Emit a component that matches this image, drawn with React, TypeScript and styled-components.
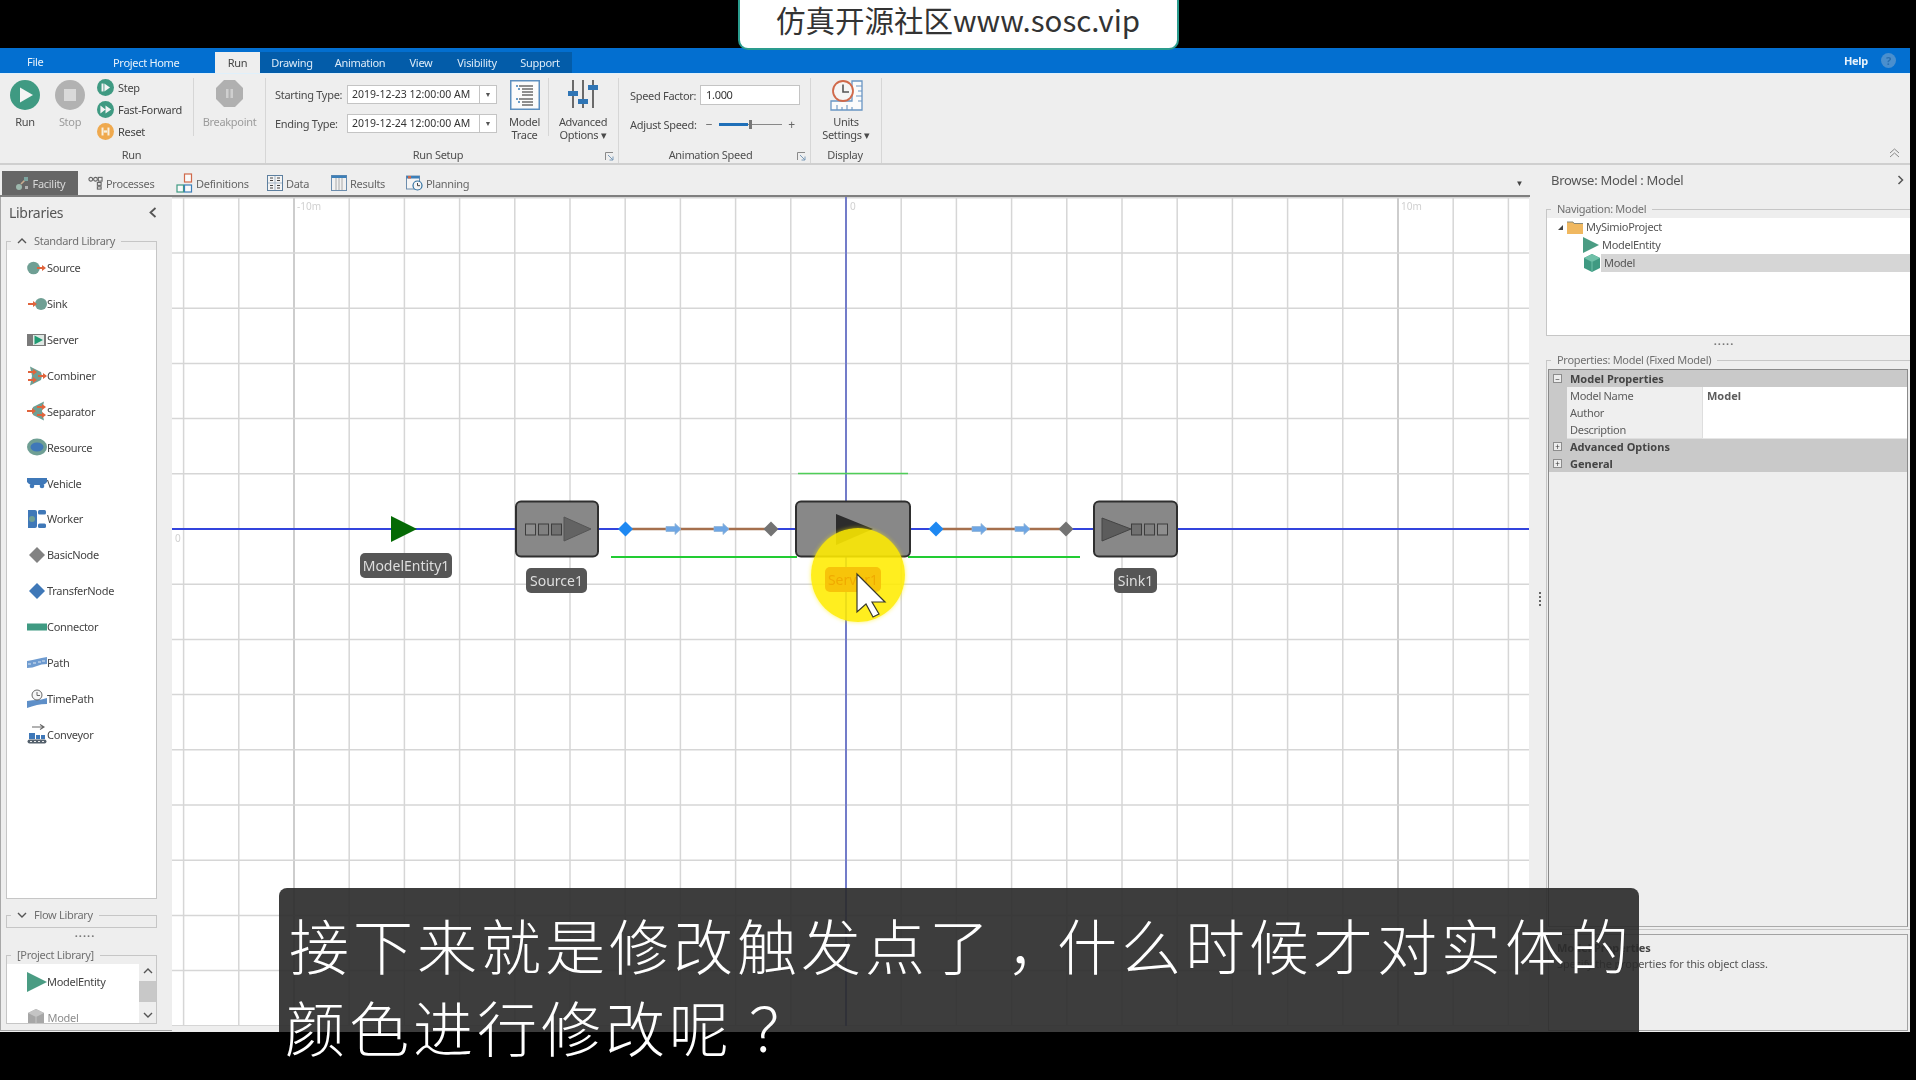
import React from "react";
import styled, { createGlobalStyle } from "styled-components";

const GlobalStyle = createGlobalStyle`
  html, body {
    margin: 0;
    padding: 0;
    background: #000;
  }
  * {
    box-sizing: border-box;
  }
`;

const UI_FONT = `"Noto Sans", "Open Sans", sans-serif`;
const CJK_FONT = `"Noto Sans CJK SC", "Noto Sans", sans-serif`;

const TEAL = "#3f9a82";
const GREY = "#b2b2b2";
const ORANGE = "#efa94e";

/* ---------- icons ---------- */

const Disc = ({ color, size, children }: any) => (
  <svg width={size} height={size} viewBox="0 0 30 30">
    <circle cx="15" cy="15" r="15" fill={color} />
    {children}
  </svg>
);

const RunIcon = () => (
  <Disc color={TEAL} size={30}>
    <path d="M10 7.5 L23 15 L10 22.5 Z" fill="#f4f4f4" />
  </Disc>
);

const StopIcon = () => (
  <Disc color={GREY} size={30}>
    <rect x="9" y="9" width="12" height="12" fill="#d9d9d9" />
  </Disc>
);

const StepIcon = () => (
  <Disc color={TEAL} size={17}>
    <rect x="8" y="8" width="3.5" height="14" fill="#f4f4f4" />
    <path d="M13 8 L23 15 L13 22 Z" fill="#f4f4f4" />
  </Disc>
);

const ForwardIcon = () => (
  <Disc color={TEAL} size={17}>
    <path d="M6 8 L15 15 L6 22 Z M15 8 L25 15 L15 22 Z" fill="#f4f4f4" />
  </Disc>
);

const ResetIcon = () => (
  <Disc color={ORANGE} size={17}>
    <rect x="8" y="8" width="3.5" height="14" fill="#f8f0e0" />
    <rect x="12" y="13" width="6" height="4" fill="#f8f0e0" />
    <rect x="18.5" y="8" width="3.5" height="14" fill="#f8f0e0" />
  </Disc>
);

const BreakpointIcon = () => (
  <svg width="27" height="27" viewBox="0 0 27 27">
    <path d="M8 0 H19 L27 8 V19 L19 27 H8 L0 19 V8 Z" fill="#b0b0b0" />
    <rect x="10" y="9" width="2.5" height="9" fill="#cfcfcf" />
    <rect x="14.5" y="9" width="2.5" height="9" fill="#cfcfcf" />
  </svg>
);

const TraceIcon = () => (
  <svg width="30" height="30" viewBox="0 0 30 30">
    <rect x="0.75" y="0.75" width="28.5" height="28.5" fill="#fbfbfb" stroke="#5d8fbf" strokeWidth="1.5" />
    <path d="M9 6 H23 M12 9 H23 M12 12 H23 M12 15 H23 M9 19 H23 M12 22 H23 M12 25 H23" stroke="#6c6c6c" strokeWidth="1.3" />
    <path d="M6 6 H8 M8 9 H10 M6 19 H8 M8 22 H10" stroke="#3c7fb8" strokeWidth="1.3" />
  </svg>
);

const SlidersIcon = () => (
  <svg width="32" height="30" viewBox="0 0 32 30">
    <path d="M6 0 V11 M6 16 V28 M16 0 V19 M16 24 V28 M26 0 V5 M26 10 V28" stroke="#6a6a6a" strokeWidth="2" />
    <rect x="1" y="11" width="10" height="5" fill="#2f75b5" />
    <rect x="11" y="19" width="10" height="5" fill="#2f75b5" />
    <rect x="21" y="5" width="10" height="5" fill="#2f75b5" />
  </svg>
);

const UnitsIcon = () => (
  <svg width="33" height="31" viewBox="0 0 33 31">
    <path d="M22 1 H32 V30 H1 V21 H22 Z" fill="#fbfbfb" stroke="#6a96c4" strokeWidth="1.3" />
    <path d="M26 6 H32 M28 11 H32 M26 16 H32 M28 21 H32 M7 25 V30 M12 27 V30 M17 25 V30 M22 27 V30" stroke="#6a96c4" strokeWidth="1.1" />
    <circle cx="13" cy="11" r="10" fill="#f5f5f5" stroke="#d0694a" strokeWidth="1.8" />
    <path d="M13 4.5 V12 H19" fill="none" stroke="#555" strokeWidth="1.6" />
  </svg>
);

const Launcher = () => (
  <svg width="9" height="9" viewBox="0 0 9 9">
    <path d="M0.5 8 V0.5 H8" fill="none" stroke="#8a8a8a" />
    <path d="M3 3 L8 8 M8 4.5 V8 H4.5" fill="none" stroke="#7a9ab8" />
  </svg>
);

const FacilityIcon = () => (
  <svg width="15" height="15" viewBox="0 0 15 15">
    <circle cx="4" cy="11" r="3" fill="#9db8ad" />
    <path d="M6 8 L11 3" stroke="#c9ad90" strokeWidth="1.6" />
    <rect x="9" y="1" width="4" height="4" fill="#7da5a0" />
    <rect x="10" y="10" width="3" height="3" fill="#b0b0b0" />
  </svg>
);

const ProcessesIcon = () => (
  <svg width="15" height="14" viewBox="0 0 16 14">
    <g fill="none" stroke="#666" strokeWidth="1.2">
      <circle cx="3" cy="3" r="2" />
      <circle cx="8" cy="3" r="2" />
      <rect x="11" y="1" width="4" height="4" />
      <rect x="10" y="6.5" width="4" height="3" />
      <rect x="10" y="11" width="4" height="2.5" />
    </g>
  </svg>
);

const DefinitionsIcon = () => (
  <svg width="17" height="20" viewBox="0 0 17 20">
    <g fill="#fafafa" strokeWidth="1.2">
      <rect x="8.5" y="1" width="7" height="8" stroke="#d0694a" />
      <rect x="1" y="12" width="6.5" height="7" stroke="#3f9a82" />
      <rect x="8.5" y="12" width="7" height="7" stroke="#3c7fb8" />
    </g>
  </svg>
);

const DataIcon = () => (
  <svg width="16" height="16" viewBox="0 0 16 16">
    <rect x="0.5" y="0.5" width="15" height="15" fill="#f4f4f4" stroke="#5d7f9f" />
    <path d="M8 1 V15 M1 8 H15" stroke="#a5b6c6" />
    <path d="M3 3 H6 M3 5.5 H6 M10 3 H13 M10 5.5 H13 M3 10.5 H6 M3 13 H6 M10 10.5 H13 M10 13 H13" stroke="#444" />
  </svg>
);

const ResultsIcon = () => (
  <svg width="16" height="16" viewBox="0 0 16 16">
    <rect x="0.5" y="0.5" width="15" height="15" fill="#f1f1f1" stroke="#6c8dad" />
    <rect x="0.5" y="0.5" width="15" height="2.5" fill="#3c7fb8" />
    <path d="M5 3 V15 M8 3 V15 M11 3 V15" stroke="#aaa" />
  </svg>
);

const PlanningIcon = () => (
  <svg width="17" height="16" viewBox="0 0 17 16">
    <rect x="0.5" y="1" width="13" height="13" fill="#f5f5f5" stroke="#6c8dad" />
    <rect x="0.5" y="1" width="13" height="2.5" fill="#3c7fb8" />
    <rect x="2" y="1" width="3" height="2.5" fill="#d0694a" />
    <circle cx="11.5" cy="10.5" r="4.5" fill="#f5f5f5" stroke="#2f6f9f" strokeWidth="1.2" />
    <path d="M11.5 8 V10.7 H14" fill="none" stroke="#444" />
  </svg>
);

const LibGlyph = ({ children, h = 20 }: any) => (
  <svg width="20" height={h} viewBox={`0 0 20 ${h}`}>
    {children}
  </svg>
);

const Dart = ({ x, y }: any) => (
  <path
    d={`M${x} ${y - 1} H${x + 5} V${y - 3} L${x + 9} ${y} L${x + 5} ${y + 3} V${y + 1} H${x} Z`}
    fill="#e0643c"
  />
);

const LIB_TEAL = "#6f9f94";
const LIB_BLUE = "#3f78b8";

const libraryIcons: Record<string, React.ReactNode> = {
  Source: (
    <LibGlyph>
      <circle cx="6.5" cy="10" r="6.3" fill={LIB_TEAL} />
      <Dart x={10} y={10} />
    </LibGlyph>
  ),
  Sink: (
    <LibGlyph>
      <circle cx="14" cy="10" r="6" fill={LIB_TEAL} />
      <Dart x={1} y={10} />
    </LibGlyph>
  ),
  Server: (
    <LibGlyph>
      <rect x="0" y="4" width="19" height="12" fill="#7a7a7a" />
      <rect x="6" y="5" width="11" height="10" fill="#dfe8e4" />
      <path d="M7.5 5.5 L16 10 L7.5 14.5 Z" fill="#1f9a72" />
    </LibGlyph>
  ),
  Combiner: (
    <LibGlyph>
      <path d="M3 0.5 L14 6 L15 10 L14 14 L3 19.5 L5 10 Z" fill={LIB_TEAL} />
      <Dart x={1} y={6} />
      <Dart x={1} y={14} />
      <Dart x={11} y={10} />
    </LibGlyph>
  ),
  Separator: (
    <LibGlyph>
      <path d="M17 0.5 L6 6 L5 10 L6 14 L17 19.5 L15 10 Z" fill={LIB_TEAL} />
      <Dart x={0} y={10} />
      <Dart x={10} y={6} />
      <Dart x={10} y={14} />
    </LibGlyph>
  ),
  Resource: (
    <LibGlyph>
      <ellipse cx="10" cy="10" rx="10" ry="8.5" fill={LIB_TEAL} />
      <ellipse cx="10" cy="10" rx="6.5" ry="4.5" fill={LIB_BLUE} />
    </LibGlyph>
  ),
  Vehicle: (
    <LibGlyph>
      <path d="M0 5 H20 V9 Q18 12 15 12 H5 Q2 12 0 9 Z" fill={LIB_BLUE} />
      <circle cx="5" cy="13" r="2.3" fill={LIB_BLUE} />
      <circle cx="15" cy="13" r="2.3" fill={LIB_BLUE} />
    </LibGlyph>
  ),
  Worker: (
    <LibGlyph>
      <path d="M1 1 H8 Q10 1 10 3 V17 Q10 19 8 19 H1 Z" fill={LIB_BLUE} />
      <rect x="11" y="1" width="8" height="4.5" rx="1.5" fill={LIB_BLUE} />
      <rect x="11" y="14.5" width="8" height="4.5" rx="1.5" fill={LIB_BLUE} />
      <circle cx="5" cy="10" r="3" fill={LIB_TEAL} />
    </LibGlyph>
  ),
  BasicNode: (
    <LibGlyph>
      <path d="M10 2 L18 10 L10 18 L2 10 Z" fill="#828282" />
    </LibGlyph>
  ),
  TransferNode: (
    <LibGlyph>
      <path d="M10 2 L18 10 L10 18 L2 10 Z" fill={LIB_BLUE} />
    </LibGlyph>
  ),
  Connector: (
    <LibGlyph>
      <rect x="0" y="6.5" width="20" height="7" fill="#3f9a82" />
    </LibGlyph>
  ),
  Path: (
    <LibGlyph>
      <path d="M0 9 Q6 8 10 7 T20 5 V12 Q14 12 10 14 T0 16 Z" fill="#6e9bd0" />
      <path d="M1 12 H4 M6 11 H9 M11 10 H14 M15 9 H18" stroke="#dce8f4" />
    </LibGlyph>
  ),
  TimePath: (
    <LibGlyph>
      <path d="M0 13 Q6 12 10 12 T20 10 V16 Q14 16 10 17 T0 20 Z" fill="#5e8fc8" />
      <circle cx="10" cy="7" r="5" fill="#f6f6f6" stroke="#6a6a6a" />
      <path d="M10 4 V7.5 H13" fill="none" stroke="#6a6a6a" />
    </LibGlyph>
  ),
  Conveyor: (
    <LibGlyph>
      <path d="M5 3 H17 M13 0.5 L17 3 L13 5.5" fill="none" stroke="#666" strokeWidth="1.1" />
      <rect x="2" y="9" width="6" height="6" fill={LIB_BLUE} />
      <rect x="9" y="11" width="4" height="4" fill={LIB_BLUE} />
      <rect x="14" y="11" width="4" height="4" fill={LIB_BLUE} />
      <rect x="0.5" y="15.5" width="19" height="4" rx="2" fill="#54606c" />
      <path d="M3 17.5 H5 M7 17.5 H9 M11 17.5 H13 M15 17.5 H17" stroke="#e8e8e8" />
    </LibGlyph>
  ),
};

const EntityIcon = ({ color, size = 20 }: any) => (
  <svg width={size} height={size} viewBox="0 0 20 20">
    <path d="M0 0 L20 10 L0 20 Z" fill={color} />
  </svg>
);

const CubeIcon = ({ top, side }: any) => (
  <svg width="18" height="18" viewBox="0 0 18 18">
    <path d="M9 0 L17 4 V14 L9 18 L1 14 V4 Z" fill={side} />
    <path d="M9 0 L17 4 L9 8 L1 4 Z" fill={top} />
    <path d="M9 8 V18" stroke={top} />
  </svg>
);

/* ---------- frame ---------- */

const Screen = styled.div`
  position: relative;
  width: 1916px;
  height: 1080px;
  background: #000;
  overflow: hidden;
  font-family: ${UI_FONT};
  display: flex;
  flex-direction: column;
`;

const TopStrip = styled.div`
  height: 48px;
  display: flex;
  justify-content: center;
`;

const Watermark = styled.div`
  position: relative;
  z-index: 3;
  width: 441px;
  height: 50px;
  background: #fff;
  border: 2px solid #2a9c8e;
  border-top: none;
  border-radius: 0 0 10px 10px;
  text-align: center;
  font-family: ${CJK_FONT};
  font-size: 29.5px;
  line-height: 38px;
  color: #333;
`;

const AppWindow = styled.div`
  width: 1910px;
  height: 984px;
  display: flex;
  flex-direction: column;
  background: #eeeeee;
  color: #4a4a4a;
  font-size: 11px;
  letter-spacing: -0.3px;
  filter: blur(0.35px);
`;

const TitleBar = styled.div`
  height: 25px;
  flex: none;
  display: flex;
  align-items: flex-end;
  background: #036fd0;
`;

const FileTab = styled.div`
  width: 70px;
  height: 21px;
  padding-left: 27px;
  line-height: 20px;
  color: #e8f2fb;
`;

const HomeTab = styled.div`
  width: 145px;
  height: 21px;
  padding-left: 43px;
  line-height: 21px;
  color: #e8f2fb;
`;

const ActiveTab = styled.div`
  width: 45px;
  height: 21px;
  background: #eeeeee;
  text-align: center;
  line-height: 22px;
  color: #444;
`;

const TabTrack = styled.div`
  width: 312px;
  height: 21px;
  display: flex;
  background: #035ca9;
  color: #dcebf8;
  line-height: 22px;
`;

const TrackTab = styled.span<{ $w: number }>`
  width: ${(p) => p.$w}px;
  text-align: center;
`;

const HelpArea = styled.div`
  margin-left: auto;
  height: 25px;
  display: flex;
  align-items: center;
  gap: 13px;
  padding-right: 14px;
  color: #e8f2fb;
  font-weight: 700;
`;

const HelpBadge = styled.span`
  width: 15px;
  height: 15px;
  border-radius: 50%;
  background: #4a8fce;
  color: #2a6fb0;
  text-align: center;
  line-height: 15px;
`;

/* ---------- ribbon ---------- */

const Ribbon = styled.div`
  position: relative;
  height: 92px;
  flex: none;
  display: flex;
  background: #eeeeee;
  border-top: 1px solid #dff0fb;
  border-bottom: 2px solid #cfcfcf;
`;

const Group = styled.div<{ $w: number }>`
  position: relative;
  width: ${(p) => p.$w}px;
  margin-top: 4px;
  display: flex;
  flex-direction: column;
  border-right: 1px solid #d6d6d6;
`;

const GroupBody = styled.div`
  flex: 1;
  display: flex;
  min-height: 0;
`;

const GroupCaption = styled.div<{ $pr?: number }>`
  height: 15px;
  padding-right: ${(p) => p.$pr ?? 0}px;
  text-align: center;
  line-height: 14px;
  color: #4f4f4f;
`;

const LauncherSlot = styled.span`
  position: absolute;
  right: 4px;
  bottom: 2px;
  line-height: 0;
`;

const BigButton = styled.div<{ $w: number; $muted?: boolean }>`
  width: ${(p) => p.$w}px;
  flex: none;
  display: flex;
  flex-direction: column;
  align-items: center;
  padding-top: 2px;
  color: ${(p) => (p.$muted ? "#9b9b9b" : "#4a4a4a")};
`;

const BigIcon = styled.div`
  height: 35px;
  line-height: 0;
`;

const BigLabel = styled.div`
  line-height: 13px;
  text-align: center;
  white-space: nowrap;
`;

const VSep = styled.div`
  width: 1px;
  height: 58px;
  flex: none;
  background: #d6d6d6;
`;

const ActionColumn = styled.div`
  width: 103px;
  flex: none;
  margin-top: -2px;
  padding-left: 7px;
  display: flex;
  flex-direction: column;
`;

const ActionRow = styled.div`
  height: 22px;
  display: flex;
  align-items: center;
  gap: 4px;
  color: #444;
  white-space: nowrap;
`;

const FieldGrid = styled.div`
  width: 226px;
  flex: none;
  margin: 7px 0 0 9px;
  display: grid;
  grid-template-columns: 72px 1fr;
  grid-auto-rows: 19px;
  row-gap: 10px;
  align-items: center;
  white-space: nowrap;
`;

const Combo = styled.div`
  height: 19px;
  width: 150px;
  display: flex;
  background: #fff;
  border: 1px solid #c4c4c4;
  color: #333;
  font-size: 10.5px;
  letter-spacing: 0;
  line-height: 17px;
  padding-left: 4px;
`;

const ComboText = styled.span`
  flex: 1;
  white-space: nowrap;
`;

const ComboArrow = styled.span`
  width: 17px;
  border-left: 1px solid #c4c4c4;
  text-align: center;
  font-size: 7px;
  color: #555;
`;

const SpeedGrid = styled.div`
  margin: 7px 0 0 11px;
  width: 172px;
  display: grid;
  grid-template-columns: 70px 100px;
  grid-auto-rows: 20px;
  row-gap: 9px;
  align-items: center;
  white-space: nowrap;
`;

const SpeedInput = styled.div`
  height: 20px;
  background: #fff;
  border: 1px solid #c4c4c4;
  padding-left: 5px;
  line-height: 18px;
  color: #333;
`;

const SliderRow = styled.div`
  display: flex;
  align-items: center;
  color: #666;
  font-size: 12px;
`;

const SliderTrack = styled.div`
  position: relative;
  width: 63px;
  height: 1px;
  margin: 0 6px 0 7px;
  background: #888;
`;

const SliderFill = styled.div`
  position: absolute;
  left: 0;
  top: -1px;
  height: 3px;
  background: #1f6fb8;
`;

const SliderThumb = styled.div`
  position: absolute;
  top: -4px;
  width: 3px;
  height: 9px;
  background: #777;
`;

const CollapseMark = styled.svg`
  position: absolute;
  right: 10px;
  bottom: 5px;
`;

/* ---------- workspace ---------- */

const Workspace = styled.div`
  flex: 1;
  min-height: 0;
  display: flex;
`;

const MainColumn = styled.div`
  width: 1530px;
  flex: none;
  display: flex;
  flex-direction: column;
`;

const DocTabs = styled.div`
  height: 32px;
  flex: none;
  display: flex;
  align-items: flex-end;
  padding: 0 4px 0 2px;
  border-bottom: 2px solid #7f7f7f;
`;

const DocTab = styled.div<{ $w: number; $active?: boolean }>`
  width: ${(p) => p.$w}px;
  height: 24px;
  display: flex;
  align-items: center;
  justify-content: ${(p) => (p.$active ? "center" : "flex-start")};
  padding-left: ${(p) => (p.$active ? 0 : 10)}px;
  gap: 3px;
  white-space: nowrap;
  background: ${(p) => (p.$active ? "#666666" : "transparent")};
  color: ${(p) => (p.$active ? "#d9d9d9" : "#666")};
`;

const DocMenu = styled.span`
  margin-left: auto;
  align-self: center;
  font-size: 8px;
  color: #444;
  padding: 5px 3px 0 0;
`;

const MainRow = styled.div`
  flex: 1;
  min-height: 0;
  display: flex;
`;

const LibraryPanel = styled.div`
  width: 172px;
  flex: none;
  padding-left: 5px;
  display: flex;
  flex-direction: column;
  border-left: 1px solid #a8a8a8;
  border-bottom: 1px solid #a8a8a8;
  margin-bottom: 1px;
`;

const LibraryHead = styled.div`
  height: 35px;
  flex: none;
  display: flex;
  align-items: center;
  justify-content: space-between;
  padding: 0 15px 5px 3px;
  font-size: 14px;
  color: #555;
`;

const ChevronGlyph = styled.svg`
  flex: none;
`;

const Frame = styled.fieldset<{ $h: number; $w?: number; $gap?: number; $open?: boolean }>`
  width: ${(p) => p.$w ?? 151}px;
  height: ${(p) => p.$h}px;
  flex: none;
  margin: ${(p) => p.$gap ?? 0}px 0 0;
  padding: 0;
  border: 1px solid #c6c6c6;
  border-right: ${(p) => (p.$open ? "none" : "1px solid #c6c6c6")};
  min-width: 0;
`;

const FrameTitle = styled.legend`
  height: 18px;
  padding: 0 6px;
  margin-left: 4px;
  line-height: 18px;
  color: #707070;
  display: flex;
  align-items: center;
  gap: 7px;
`;

const LibList = styled.div<{ $h: number }>`
  flex: 1;
  height: ${(p) => p.$h}px;
  background: #fff;
  overflow: hidden;
`;

const LibItem = styled.div<{ $muted?: boolean }>`
  height: 35.87px;
  padding-left: 20px;
  display: flex;
  align-items: center;
  color: ${(p) => (p.$muted ? "#8c8c8c" : "#444")};
  white-space: nowrap;
`;

const DotsRow = styled.div<{ $h: number }>`
  height: ${(p) => p.$h}px;
  flex: none;
  text-align: center;
  letter-spacing: 1px;
  line-height: 10px;
  color: #777;
  font-weight: 700;
  padding-right: 8px;
`;

const ProjectBody = styled.div`
  height: 59px;
  display: flex;
`;

const ScrollRail = styled.div`
  width: 17px;
  flex: none;
  display: flex;
  flex-direction: column;
  align-items: center;
  background: #eeeeee;
  color: #666;
`;

const ScrollThumb = styled.div`
  width: 100%;
  height: 21px;
  margin: 3px 0 6px;
  background: #c8c8c8;
`;

const ScrollBtn = styled.div`
  height: 14px;
  display: flex;
  align-items: center;
`;

const Canvas = styled.div`
  position: relative;
  width: 1357px;
  height: 829px;
  flex: none;
  background: #fff;
  overflow: hidden;
  letter-spacing: 0;
`;

const Diagram = styled.svg`
  position: absolute;
  left: 0;
  top: 0;
`;

const Ruler = styled.span<{ $x: number; $y: number }>`
  position: absolute;
  left: ${(p) => p.$x - 172}px;
  top: ${(p) => p.$y - 197}px;
  font-size: 10px;
  line-height: 12px;
  color: #d0d0d0;
`;

const NodeLabel = styled.div<{ $x: number; $y: number; $w: number; $hot?: boolean }>`
  position: absolute;
  z-index: ${(p) => (p.$hot ? 2 : 0)};
  left: ${(p) => p.$x - 172}px;
  top: ${(p) => p.$y - 197}px;
  width: ${(p) => p.$w}px;
  height: 25px;
  background: ${(p) => (p.$hot ? "#f7c40a" : "#565656")};
  border-radius: 5px;
  text-align: center;
  line-height: 26px;
  font-size: 14px;
  color: ${(p) => (p.$hot ? "#f0aa00" : "#dedede")};
  white-space: nowrap;
`;

const Highlight = styled.div`
  position: absolute;
  z-index: 1;
  left: ${811 - 172}px;
  top: ${528 - 197}px;
  width: 94px;
  height: 94px;
  border-radius: 50%;
  background: rgba(255, 236, 0, 0.88);
  box-shadow: 0 0 4px rgba(255, 236, 0, 0.6);
`;

const PointerOverlay = styled.svg`
  position: absolute;
  z-index: 3;
  left: ${850 - 172}px;
  top: ${570 - 197}px;
`;

/* ---------- right panel ---------- */

const Splitter = styled.div`
  width: 14px;
  flex: none;
  display: flex;
  align-items: center;
  justify-content: center;
`;

const GripDots = styled.div`
  width: 2px;
  height: 14px;
  margin-left: 6px;
  background: repeating-linear-gradient(#666 0 2px, transparent 2px 4px);
`;

const SidePanel = styled.div`
  flex: 1;
  min-width: 0;
  display: flex;
  flex-direction: column;
  padding-left: 2px;
  overflow: hidden;
`;

const SideHead = styled.div`
  height: 35px;
  flex: none;
  display: flex;
  align-items: center;
  justify-content: space-between;
  padding: 0 6px 5px 5px;
  font-size: 13px;
  color: #555;
`;

const NavTree = styled.div`
  height: 117px;
  background: #fff;
`;

const TreeRow = styled.div<{ $indent: number }>`
  height: 18px;
  display: flex;
  align-items: center;
  padding-left: ${(p) => p.$indent}px;
  color: #555;
`;

const TreeLabel = styled.span<{ $selected?: boolean }>`
  flex: 1;
  height: 18px;
  line-height: 18px;
  padding-left: 3px;
  background: ${(p) => (p.$selected ? "#d6d6d6" : "transparent")};
`;

const ExpandArrow = styled.span`
  width: 0;
  height: 0;
  margin-right: 4px;
  border-left: 5px solid transparent;
  border-bottom: 5px solid #444;
`;

const PropsBox = styled.div`
  width: 360px;
  height: 558px;
  margin-left: 1px;
  background: #eeeeee;
  border: 1px solid #8a8a8a;
  border-bottom-color: #aaa;
`;

const SectionRow = styled.div`
  height: 17px;
  display: flex;
  align-items: center;
  background: #c9c9c9;
  font-weight: 700;
  letter-spacing: 0;
  color: #444;
`;

const ToggleBox = styled.span`
  width: 9px;
  height: 9px;
  margin: 0 8px 0 4px;
  border: 1px solid #8c8c8c;
  background: #ececec;
  font-size: 8px;
  line-height: 7px;
  text-align: center;
  font-weight: 400;
  color: #333;
`;

const PropRow = styled.div`
  height: 17px;
  display: grid;
  grid-template-columns: 18px 135px 1fr;
  color: #5c5c5c;
`;

const Gutter = styled.div`
  background: #c9c9c9;
`;

const PropName = styled.div`
  padding-left: 3px;
  line-height: 17px;
  background: #efefef;
  border-bottom: 1px solid #dedede;
`;

const PropValue = styled.div`
  padding-left: 4px;
  line-height: 17px;
  background: #fff;
  border-left: 1px solid #dedede;
  border-bottom: 1px solid #e6e6e6;
  font-weight: 700;
  letter-spacing: 0;
`;

const HelpBox = styled.div`
  width: 360px;
  height: 97px;
  flex: none;
  margin: 4px 0 1px 2px;
  padding: 5px 8px;
  border: 1px solid #a2a2a2;
  line-height: 16px;
  letter-spacing: -0.15px;
  color: #555;
`;

const HelpTitle = styled.div`
  font-weight: 700;
  letter-spacing: 0;
  color: #444;
`;

/* ---------- caption ---------- */

const Caption = styled.div`
  position: absolute;
  z-index: 4;
  left: 279px;
  top: 888px;
  width: 1360px;
  height: 144px;
  padding: 15px 0 0 10px;
  background: rgba(42, 42, 42, 0.91);
  border-radius: 8px 8px 0 0;
  font-family: ${CJK_FONT};
  font-size: 60px;
  font-weight: 300;
  line-height: 82px;
  letter-spacing: 4px;
  color: #fff;
  white-space: nowrap;
`;

const CaptionLine = styled.div<{ $nudge?: boolean }>`
  margin-left: ${(p) => (p.$nudge ? -4 : 0)}px;
`;

const Punct = styled.span<{ $dx: number }>`
  display: inline-block;
  transform: translateX(${(p) => p.$dx}px);
`;

/* ---------- data ---------- */

const trackTabs: [string, number][] = [
  ["Drawing", 64],
  ["Animation", 72],
  ["View", 50],
  ["Visibility", 62],
  ["Support", 64],
];

const docTabs = [
  { name: "Processes", w: 88, icon: <ProcessesIcon /> },
  { name: "Definitions", w: 91, icon: <DefinitionsIcon /> },
  { name: "Data", w: 64, icon: <DataIcon /> },
  { name: "Results", w: 75, icon: <ResultsIcon /> },
  { name: "Planning", w: 80, icon: <PlanningIcon /> },
];

const libraryNames = [
  "Source",
  "Sink",
  "Server",
  "Combiner",
  "Separator",
  "Resource",
  "Vehicle",
  "Worker",
  "BasicNode",
  "TransferNode",
  "Connector",
  "Path",
  "TimePath",
  "Conveyor",
];

const steps = Array.from({ length: 27 }, (_, i) => i - 13);

const BlockArrow = ({ x }: any) => (
  <path
    d={`M${x} 526.5 H${x + 9} V523.5 L${x + 15} 529 L${x + 9} 534.5 V531.5 H${x} Z`}
    fill="#6ea6e4"
    stroke="#8fb4d8"
    strokeWidth="0.8"
  />
);

const Diamond = ({ x, color, r = 7.5 }: any) => (
  <path d={`M${x} ${529 - r} L${x + r} 529 L${x} ${529 + r} L${x - r} 529 Z`} fill={color} />
);

const Pad = ({ x, w }: any) => (
  <rect x={x} y="501.5" width={w} height="55" rx="5" fill="#888888" stroke="#2f2f2f" strokeWidth="2" />
);

const Cell = ({ x, tone }: any) => (
  <rect x={x} y="524" width="10" height="11" fill={tone} stroke="#3c3c3c" />
);

const chevronUp = <path d="M1 6 L5 2 L9 6" fill="none" stroke="#555" strokeWidth="1.4" />;
const chevronDown = <path d="M1 2 L5 6 L9 2" fill="none" stroke="#555" strokeWidth="1.4" />;

export default function App() {
  return (
    <Screen>
      <GlobalStyle />
      <TopStrip>
        <Watermark>仿真开源社区www.sosc.vip</Watermark>
      </TopStrip>

      <AppWindow>
        <TitleBar>
          <FileTab>File</FileTab>
          <HomeTab>Project Home</HomeTab>
          <ActiveTab>Run</ActiveTab>
          <TabTrack>
            {trackTabs.map(([name, w]) => (
              <TrackTab key={name} $w={w}>
                {name}
              </TrackTab>
            ))}
          </TabTrack>
          <HelpArea>
            Help
            <HelpBadge>?</HelpBadge>
          </HelpArea>
        </TitleBar>

        <Ribbon>
          <Group $w={266}>
            <GroupBody>
              <BigButton $w={50}>
                <BigIcon>
                  <RunIcon />
                </BigIcon>
                <BigLabel>Run</BigLabel>
              </BigButton>
              <BigButton $w={40} $muted>
                <BigIcon>
                  <StopIcon />
                </BigIcon>
                <BigLabel>Stop</BigLabel>
              </BigButton>
              <ActionColumn>
                <ActionRow>
                  <StepIcon />
                  Step
                </ActionRow>
                <ActionRow>
                  <ForwardIcon />
                  Fast-Forward
                </ActionRow>
                <ActionRow>
                  <ResetIcon />
                  Reset
                </ActionRow>
              </ActionColumn>
              <VSep />
              <BigButton $w={71} $muted>
                <BigIcon>
                  <BreakpointIcon />
                </BigIcon>
                <BigLabel>Breakpoint</BigLabel>
              </BigButton>
            </GroupBody>
            <GroupCaption $pr={2}>Run</GroupCaption>
          </Group>

          <Group $w={353}>
            <GroupBody>
              <FieldGrid>
                Starting Type:
                <Combo>
                  <ComboText>2019-12-23 12:00:00 AM</ComboText>
                  <ComboArrow>▼</ComboArrow>
                </Combo>
                Ending Type:
                <Combo>
                  <ComboText>2019-12-24 12:00:00 AM</ComboText>
                  <ComboArrow>▼</ComboArrow>
                </Combo>
              </FieldGrid>
              <BigButton $w={47}>
                <BigIcon>
                  <TraceIcon />
                </BigIcon>
                <BigLabel>Model</BigLabel>
                <BigLabel>Trace</BigLabel>
              </BigButton>
              <VSep />
              <BigButton $w={68}>
                <BigIcon>
                  <SlidersIcon />
                </BigIcon>
                <BigLabel>Advanced</BigLabel>
                <BigLabel>Options ▾</BigLabel>
              </BigButton>
            </GroupBody>
            <GroupCaption $pr={8}>Run Setup</GroupCaption>
            <LauncherSlot>
              <Launcher />
            </LauncherSlot>
          </Group>

          <Group $w={192}>
            <GroupBody>
              <SpeedGrid>
                Speed Factor:
                <SpeedInput>1.000</SpeedInput>
                Adjust Speed:
                <SliderRow>
                  &nbsp;&nbsp;−
                  <SliderTrack>
                    <SliderFill style={{ width: "46%" }} />
                    <SliderThumb style={{ left: "47%" }} />
                  </SliderTrack>
                  +
                </SliderRow>
              </SpeedGrid>
            </GroupBody>
            <GroupCaption $pr={8}>Animation Speed</GroupCaption>
            <LauncherSlot>
              <Launcher />
            </LauncherSlot>
          </Group>

          <Group $w={71}>
            <GroupBody>
              <BigButton $w={70}>
                <BigIcon>
                  <UnitsIcon />
                </BigIcon>
                <BigLabel>Units</BigLabel>
                <BigLabel>Settings ▾</BigLabel>
              </BigButton>
            </GroupBody>
            <GroupCaption $pr={2}>Display</GroupCaption>
          </Group>

          <CollapseMark width="11" height="10" viewBox="0 0 11 10">
            <path d="M1 5 L5.5 1 L10 5 M1 9 L5.5 5 L10 9" fill="none" stroke="#8a8a8a" />
          </CollapseMark>
        </Ribbon>

        <Workspace>
          <MainColumn>
            <DocTabs>
              <DocTab $w={76} $active>
                <FacilityIcon />
                Facility
              </DocTab>
              {docTabs.map((tab) => (
                <DocTab key={tab.name} $w={tab.w}>
                  {tab.icon}
                  {tab.name}
                </DocTab>
              ))}
              <DocMenu>▼</DocMenu>
            </DocTabs>

            <MainRow>
              <LibraryPanel>
                <LibraryHead>
                  Libraries
                  <ChevronGlyph width="8" height="11" viewBox="0 0 8 11">
                    <path d="M6.5 1 L1.5 5.5 L6.5 10" fill="none" stroke="#555" strokeWidth="1.8" />
                  </ChevronGlyph>
                </LibraryHead>
                <Frame $h={667}>
                  <FrameTitle>
                    <svg width="10" height="8" viewBox="0 0 10 8">
                      {chevronUp}
                    </svg>
                    Standard Library
                  </FrameTitle>
                  <LibList $h={648}>
                    {libraryNames.map((name) => (
                      <LibItem key={name}>
                        {libraryIcons[name]}
                        {name}
                      </LibItem>
                    ))}
                  </LibList>
                </Frame>
                <Frame $h={22} $gap={7}>
                  <FrameTitle>
                    <svg width="10" height="8" viewBox="0 0 10 8">
                      {chevronDown}
                    </svg>
                    Flow Library
                  </FrameTitle>
                </Frame>
                <DotsRow $h={18}>.....</DotsRow>
                <Frame $h={78}>
                  <FrameTitle>[Project Library]</FrameTitle>
                  <ProjectBody>
                    <LibList $h={59}>
                      <LibItem>
                        <EntityIcon color="#4a9c83" />
                        ModelEntity
                      </LibItem>
                      <LibItem $muted>
                        <CubeIcon top="#c4c4c4" side="#a6a6a6" />
                        &nbsp;Model
                      </LibItem>
                    </LibList>
                    <ScrollRail>
                      <ScrollBtn>
                        <svg width="10" height="8" viewBox="0 0 10 8">
                          {chevronUp}
                        </svg>
                      </ScrollBtn>
                      <ScrollThumb />
                      <ScrollBtn>
                        <svg width="10" height="8" viewBox="0 0 10 8">
                          {chevronDown}
                        </svg>
                      </ScrollBtn>
                    </ScrollRail>
                  </ProjectBody>
                </Frame>
              </LibraryPanel>

              <Canvas>
                <Diagram width="1357" height="829" viewBox="172 197 1357 829">
                  {steps.map((n) => (
                    <line
                      key={`v${n}`}
                      x1={846 + n * 55.2}
                      x2={846 + n * 55.2}
                      y1="197"
                      y2="1026"
                      stroke={n % 10 === 0 ? "#bdbdbd" : "#d6d6d6"}
                      strokeWidth="1.5"
                    />
                  ))}
                  {steps.map((n) => (
                    <line key={`h${n}`} x1="172" x2="1529" y1={529 + n * 55.2} y2={529 + n * 55.2} stroke="#d6d6d6" strokeWidth="1.5" />
                  ))}
                  <line x1="846" x2="846" y1="197" y2="1026" stroke="#5c68c8" strokeWidth="1.6" />
                  <line x1="172" x2="1529" y1="529" y2="529" stroke="#3344dd" strokeWidth="2" />
                  <line x1="798" x2="908" y1="473.5" y2="473.5" stroke="#4fce58" strokeWidth="1.4" />
                  <line x1="611" x2="797" y1="557" y2="557" stroke="#22cc33" strokeWidth="2" />
                  <line x1="908" x2="1080" y1="557" y2="557" stroke="#22cc33" strokeWidth="2" />
                  <line x1="625" x2="771" y1="529" y2="529" stroke="#a56f4d" strokeWidth="2.4" />
                  <line x1="936" x2="1066" y1="529" y2="529" stroke="#a56f4d" strokeWidth="2.4" />
                  <BlockArrow x={666} />
                  <BlockArrow x={714} />
                  <BlockArrow x={972} />
                  <BlockArrow x={1015} />
                  <Diamond x={625.5} color="#1e88f2" />
                  <Diamond x={771} color="#737373" />
                  <Diamond x={936} color="#1e88f2" />
                  <Diamond x={1066} color="#737373" />

                  <path d="M391 516 L417 529 L391 542 Z" fill="#056a05" />

                  <Pad x={516} w={82} />
                  <Cell x={525.5} tone="#8e8e8e" />
                  <Cell x={538.5} tone="#808080" />
                  <Cell x={551.5} tone="#707070" />
                  <path d="M564 517 L591 529 L564 541 Z" fill="#636363" stroke="#555" />

                  <Pad x={796} w={114} />
                  <path d="M836 514 L873 529 L836 545 Z" fill="#2c2c2c" />

                  <Pad x={1094} w={83} />
                  <path d="M1102 518 L1131 529 L1102 541 Z" fill="#5c5c5c" stroke="#444" />
                  <Cell x={1131.5} tone="#707070" />
                  <Cell x={1144.5} tone="#808080" />
                  <Cell x={1157.5} tone="#8e8e8e" />
                </Diagram>

                <Ruler $x={297} $y={200}>-10m</Ruler>
                <Ruler $x={850} $y={200}>0</Ruler>
                <Ruler $x={1401} $y={200}>10m</Ruler>
                <Ruler $x={175} $y={532}>0</Ruler>

                <NodeLabel $x={360} $y={553} $w={92}>ModelEntity1</NodeLabel>
                <NodeLabel $x={526} $y={568} $w={61}>Source1</NodeLabel>
                <NodeLabel $x={825} $y={567} $w={56} $hot>Server1</NodeLabel>
                <NodeLabel $x={1114} $y={568} $w={43}>Sink1</NodeLabel>

                <Highlight />
                <PointerOverlay width="40" height="52" viewBox="850 570 40 52">
                  <path
                    d="M857 574 L857 612 L866 604 L873 617 L879 614 L872 602 L885 602 Z"
                    fill="#fff"
                    stroke="#3a3a2a"
                    strokeWidth="1.2"
                  />
                </PointerOverlay>
              </Canvas>
            </MainRow>
          </MainColumn>

          <Splitter>
            <GripDots />
          </Splitter>

          <SidePanel>
            <SideHead>
              Browse: Model : Model
              <ChevronGlyph width="7" height="10" viewBox="0 0 7 10">
                <path d="M1.5 1 L5.5 5 L1.5 9" fill="none" stroke="#555" strokeWidth="1.5" />
              </ChevronGlyph>
            </SideHead>

            <Frame $h={136} $w={364} $open>
              <FrameTitle>Navigation: Model</FrameTitle>
              <NavTree>
                <TreeRow $indent={11}>
                  <ExpandArrow />
                  <svg width="16" height="13" viewBox="0 0 16 13">
                    <path d="M0 1 H6 L7 2 H16 V13 H0 Z" fill="#f0b860" />
                    <path d="M0 1 H6 L7 2.5 H16" fill="none" stroke="#8a8a7a" />
                  </svg>
                  <TreeLabel>MySimioProject</TreeLabel>
                </TreeRow>
                <TreeRow $indent={36}>
                  <EntityIcon color="#4a9c83" size={16} />
                  <TreeLabel>ModelEntity</TreeLabel>
                </TreeRow>
                <TreeRow $indent={36}>
                  <CubeIcon top="#6fc0a8" side="#3f9a82" />
                  <TreeLabel $selected>Model</TreeLabel>
                </TreeRow>
              </NavTree>
            </Frame>
            <DotsRow $h={15}>.....</DotsRow>
            <Frame $h={579} $w={364} $open>
              <FrameTitle>Properties: Model (Fixed Model)</FrameTitle>
              <PropsBox>
                <SectionRow>
                  <ToggleBox>−</ToggleBox>
                  Model Properties
                </SectionRow>
                <PropRow>
                  <Gutter />
                  <PropName>Model Name</PropName>
                  <PropValue>Model</PropValue>
                </PropRow>
                <PropRow>
                  <Gutter />
                  <PropName>Author</PropName>
                  <PropValue />
                </PropRow>
                <PropRow>
                  <Gutter />
                  <PropName>Description</PropName>
                  <PropValue />
                </PropRow>
                <SectionRow>
                  <ToggleBox>+</ToggleBox>
                  Advanced Options
                </SectionRow>
                <SectionRow>
                  <ToggleBox>+</ToggleBox>
                  General
                </SectionRow>
              </PropsBox>
            </Frame>
            <HelpBox>
              <HelpTitle>Model Properties</HelpTitle>
              Specify the properties for this object class.
            </HelpBox>
          </SidePanel>
        </Workspace>
      </AppWindow>

      <Caption>
        <CaptionLine>
          接下来就是修改触发点了<Punct $dx={14}>，</Punct>什么时候才对实体的
        </CaptionLine>
        <CaptionLine $nudge>
          颜色进行修改呢<Punct $dx={16}>？</Punct>
        </CaptionLine>
      </Caption>
    </Screen>
  );
}
